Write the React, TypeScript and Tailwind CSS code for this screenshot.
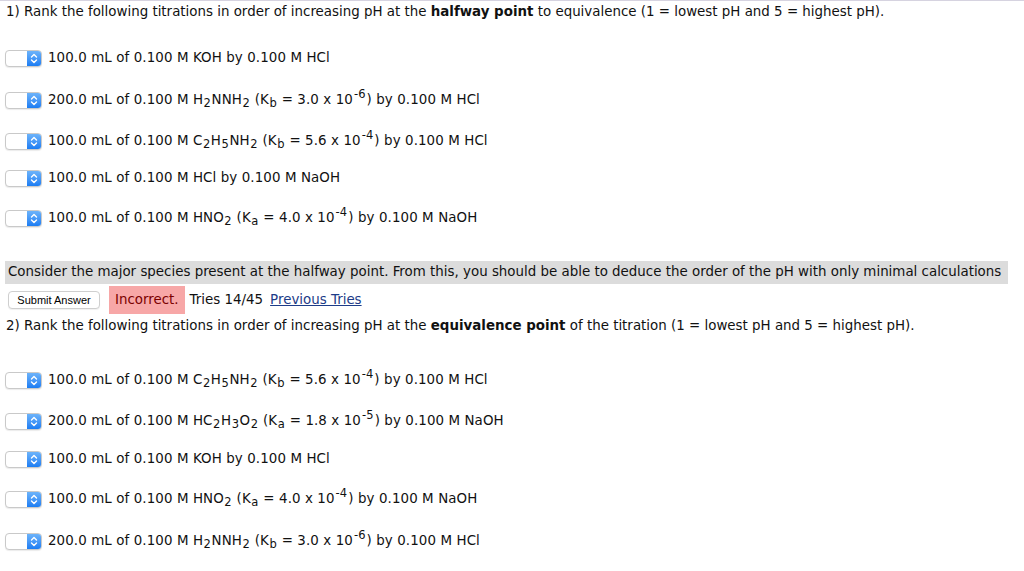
import React from "react";

type Part = string | { sub: string } | { sup: string };

function Sel() {
  return (
    <span className="inline-flex h-[17px] w-[37px] shrink-0 overflow-hidden rounded-[4px] border border-[#c9c9c9] bg-white shadow-[0_1px_1px_rgba(0,0,0,0.08)]">
      <span className="flex-1" />
      <span className="flex w-[14px] items-center justify-center bg-gradient-to-b from-[#6cb3fa] to-[#1a7df3]">
        <svg width="8" height="11" viewBox="0 0 8 11" fill="none" stroke="white" strokeWidth="1.4" strokeLinecap="round" strokeLinejoin="round">
          <path d="M1.5 4 L4 1.5 L6.5 4" />
          <path d="M1.5 7 L4 9.5 L6.5 7" />
        </svg>
      </span>
    </span>
  );
}

function Row({ parts, className }: { parts: Part[]; className: string }) {
  return (
    <div className={`flex h-[24px] items-center pl-[5px] ${className}`}>
      <Sel />
      <span className="ml-[6px] whitespace-nowrap tracking-[0.1px]">
        {parts.map((p, i) =>
          typeof p === "string" ? (
            <span key={i}>{p}</span>
          ) : "sub" in p ? (
            <sub key={i} className="-bottom-[3px] px-[0.5px] text-[11.5px]">{p.sub}</sub>
          ) : (
            <sup key={i} className="mx-[1px] text-[11.5px]">{p.sup}</sup>
          )
        )}
      </span>
    </div>
  );
}

const KOH: Part[] = ["100.0 mL of 0.100 M KOH by 0.100 M HCl"];
const HYD: Part[] = ["200.0 mL of 0.100 M H", { sub: "2" }, "NNH", { sub: "2" }, " (K", { sub: "b" }, " = 3.0 x 10", { sup: "-6" }, ") by 0.100 M HCl"];
const ETH: Part[] = ["100.0 mL of 0.100 M C", { sub: "2" }, "H", { sub: "5" }, "NH", { sub: "2" }, " (K", { sub: "b" }, " = 5.6 x 10", { sup: "-4" }, ") by 0.100 M HCl"];
const HCL: Part[] = ["100.0 mL of 0.100 M HCl by 0.100 M NaOH"];
const HNO: Part[] = ["100.0 mL of 0.100 M HNO", { sub: "2" }, " (K", { sub: "a" }, " = 4.0 x 10", { sup: "-4" }, ") by 0.100 M NaOH"];
const ACE: Part[] = ["200.0 mL of 0.100 M HC", { sub: "2" }, "H", { sub: "3" }, "O", { sub: "2" }, " (K", { sub: "a" }, " = 1.8 x 10", { sup: "-5" }, ") by 0.100 M NaOH"];

export default function App() {
  return (
    <div className="h-[571px] w-[1024px] overflow-hidden border-t border-[#d6d3e0] bg-white text-[13.4px] text-[#111] [font-family:Verdana,'DejaVu_Sans',sans-serif]">
      <div className="flex h-[22px] items-center pl-[6px]">
        1) Rank the following titrations in order of increasing pH at the&nbsp;<b>halfway point</b>&nbsp;to equivalence (1 = lowest pH and 5 = highest pH).
      </div>
      <Row parts={KOH} className="mt-[23px]" />
      <Row parts={HYD} className="mt-[18px]" />
      <Row parts={ETH} className="mt-[17px]" />
      <Row parts={HCL} className="mt-[13px]" />
      <Row parts={HNO} className="mt-[16px]" />

      <div className="ml-[5px] mt-[31px] flex h-[23px] w-[1003px] items-center bg-[#dcdcdc] pl-[3px] whitespace-nowrap">
        Consider the major species present at the halfway point. From this, you should be able to deduce the order of the pH with only minimal calculations
      </div>

      <div className="mt-[2px] flex h-[28px] items-center">
        <button className="ml-[8px] h-[18px] w-[92px] rounded-[4px] border border-[#cfcfcf] bg-white text-[11px] text-black shadow-[0_1px_1px_rgba(0,0,0,0.06)] [font-family:'Liberation_Sans',Arial,sans-serif]">
          Submit Answer
        </button>
        <span className="ml-[9px] flex h-[28px] items-center bg-[#f7a7a7] px-[6px] text-[#7a0000]">Incorrect.</span>
        <span className="ml-[5px]">Tries 14/45</span>
        <a className="ml-[7px] text-[#1d3c88] underline" href="#">Previous Tries</a>
      </div>

      <div className="mt-[1px] flex h-[22px] items-center pl-[6px]">
        2) Rank the following titrations in order of increasing pH at the&nbsp;<b>equivalence point</b>&nbsp;of the titration (1 = lowest pH and 5 = highest pH).
      </div>
      <Row parts={ETH} className="mt-[31px]" />
      <Row parts={ACE} className="mt-[17px]" />
      <Row parts={KOH} className="mt-[14px]" />
      <Row parts={HNO} className="mt-[16px]" />
      <Row parts={HYD} className="mt-[18px]" />
    </div>
  );
}
